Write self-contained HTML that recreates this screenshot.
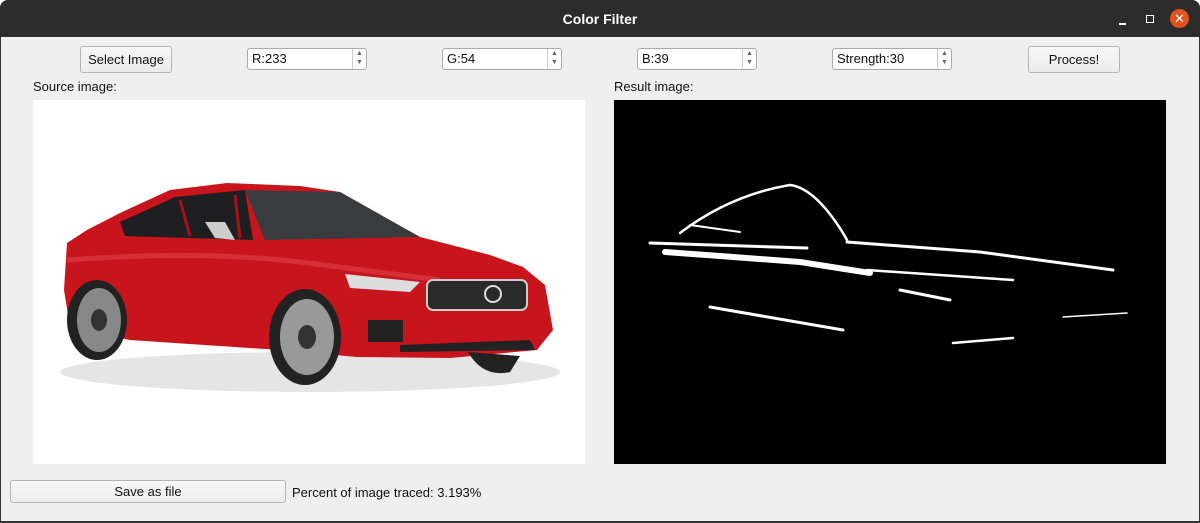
<!DOCTYPE html>
<html><head><meta charset="utf-8"><style>
*{margin:0;padding:0;box-sizing:border-box}
body{width:1200px;height:523px;background:#fff;font-family:"Liberation Sans","DejaVu Sans",sans-serif;font-size:13px;color:#111;position:relative;overflow:hidden}
.win{position:absolute;left:0;top:0;width:1200px;height:523px;background:#efefef;box-shadow:inset 1px 0 #333,inset -1px 0 #333,inset 0 -2px #333;border-radius:8px 8px 0 0;overflow:hidden}
.title{position:absolute;left:0;top:0;width:1200px;height:37px;background:#2c2c2c;color:#fff;font-weight:bold;font-size:14px;text-align:center;line-height:38px}
.btn{position:absolute;height:27px;border:1px solid #b5b5b5;border-radius:3px;background:linear-gradient(#f8f8f8,#ebebeb);text-align:center;line-height:25px}
.spin{position:absolute;top:48px;height:22px;width:120px;background:#fff;border:1px solid #aaa;border-radius:3px;line-height:20px;padding-left:4px}
.spin i{position:absolute;right:0;top:0;width:14px;height:20px;border-left:1px solid #ccc;font-style:normal;font-size:7px;line-height:9px;text-align:center;color:#666}
.lbl{position:absolute}
</style></head><body>
<div class="win">
<div class="title">Color Filter</div>
<div style="position:absolute;left:1119px;top:23px;width:7px;height:2px;background:#fff"></div>
<div style="position:absolute;left:1146px;top:15px;width:8px;height:8px;border:1.5px solid #fff"></div>
<div style="position:absolute;left:1170px;top:9px;width:19px;height:19px;border-radius:50%;background:#e0531f;color:#fff;text-align:center;line-height:19px;font-size:13px">✕</div>

<div class="btn" style="left:80px;top:46px;width:92px">Select Image</div>
<div class="spin" style="left:247px">R:233<i>▲<br>▼</i></div>
<div class="spin" style="left:442px">G:54<i>▲<br>▼</i></div>
<div class="spin" style="left:637px">B:39<i>▲<br>▼</i></div>
<div class="spin" style="left:832px">Strength:30<i>▲<br>▼</i></div>
<div class="btn" style="left:1028px;top:46px;width:92px">Process!</div>

<div class="lbl" style="left:33px;top:79px">Source image:</div>
<div class="lbl" style="left:614px;top:79px">Result image:</div>

<svg style="position:absolute;left:33px;top:100px" width="552" height="364" viewBox="33 100 552 364">
<rect x="33" y="100" width="552" height="364" fill="#fff"/>
<ellipse cx="310" cy="372" rx="250" ry="20" fill="#ccc" opacity=".5"/>
<path d="M67,243 L87,230 L120,213 L170,190 L227,183 L300,186 L340,192 L420,237 L490,255 L523,267 L545,285 L553,330 L537,350 L450,358 L357,357 L280,350 L130,340 L70,327 L64,290 Z" fill="#c8141c"/>
<path d="M120,222 L175,197 L245,190 L253,240 L125,236 Z" fill="#1f1f22"/>
<path d="M245,190 L340,192 L420,237 L265,240 Z" fill="#3a3b3e"/>
<path d="M180,200 L190,236 M235,195 L240,238" stroke="#a5101a" stroke-width="3"/>
<path d="M67,260 Q200,250 300,262 L440,280" stroke="#e04048" stroke-width="5" fill="none" opacity=".6"/>
<path d="M345,274 L420,282 L410,292 L350,288 Z" fill="#ddd"/>
<rect x="427" y="280" width="100" height="30" rx="6" fill="#2a2a2a" stroke="#ccc" stroke-width="2"/>
<circle cx="493" cy="294" r="8" fill="none" stroke="#ddd" stroke-width="2"/>
<rect x="368" y="320" width="35" height="22" fill="#222"/>
<path d="M400,345 L530,340 L535,350 L400,352 Z" fill="#222"/>
<path d="M205,222 L225,222 L235,240 L215,238 Z" fill="#ccc"/>
<ellipse cx="97" cy="320" rx="30" ry="40" fill="#222"/>
<ellipse cx="99" cy="320" rx="22" ry="32" fill="#888"/>
<ellipse cx="99" cy="320" rx="8" ry="11" fill="#333"/>
<ellipse cx="305" cy="337" rx="36" ry="48" fill="#222"/>
<ellipse cx="307" cy="337" rx="27" ry="38" fill="#999"/>
<ellipse cx="307" cy="337" rx="9" ry="12" fill="#333"/>
<path d="M468,352 Q483,378 510,372 L520,356 Z" fill="#222"/>
</svg>

<svg style="position:absolute;left:614px;top:100px" width="552" height="364" viewBox="614 100 552 364">
<rect x="614" y="100" width="552" height="364" fill="#000"/>
<g fill="none" stroke="#fff" stroke-linecap="round">
<path d="M680,233 Q730,195 790,185 Q815,188 843,233 L847,240" stroke-width="2.5"/>
<path d="M650,243 L807,248" stroke-width="3"/>
<path d="M665,252 L720,256 L800,262 L870,273" stroke-width="6"/>
<path d="M847,242 L980,252 L1113,270" stroke-width="3"/>
<path d="M867,270 L1013,280" stroke-width="2.5"/>
<path d="M900,290 L950,300" stroke-width="3"/>
<path d="M710,307 L843,330" stroke-width="3"/>
<path d="M953,343 L1013,338" stroke-width="2.5"/>
<path d="M1063,317 L1127,313" stroke-width="1.5"/>
<path d="M690,225 L740,232" stroke-width="2"/>
</g>
</svg>

<div class="btn" style="left:10px;top:480px;width:276px;height:23px;line-height:21px">Save as file</div>
<div class="lbl" style="left:292px;top:485px">Percent of image traced: 3.193%</div>
</div>
</body></html>
